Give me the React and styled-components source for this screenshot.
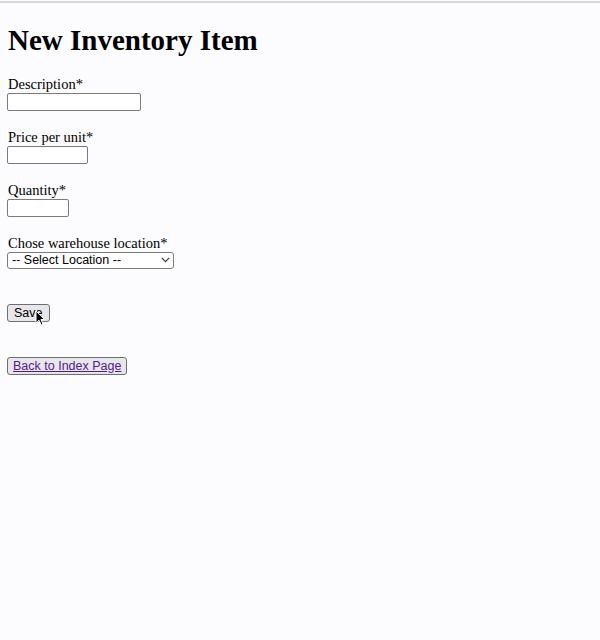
import React from "react";
import styled, { createGlobalStyle } from "styled-components";

const GlobalStyle = createGlobalStyle`
  html, body {
    margin: 0;
    padding: 0;
    background: #fcfbfd;
  }
  body {
    font-family: "Liberation Serif", "Times New Roman", serif;
    color: #000;
  }
`;

const TopRule = styled.div`
  height: 2px;
  margin-top: 1px;
  background: #d7d6d9;
`;

const Page = styled.main`
  padding: 0 7px;
  display: flex;
  flex-direction: column;
  align-items: flex-start;
`;

const Title = styled.h1`
  margin: 20px 0 0 1px;
  font-size: 29px;
  line-height: 34px;
  font-weight: bold;
`;

const Form = styled.form`
  margin-top: 19px;
  display: flex;
  flex-direction: column;
  align-items: flex-start;
  gap: 18px;
`;

const Field = styled.div`
  display: flex;
  flex-direction: column;
  align-items: flex-start;
`;

const Label = styled.label`
  margin-left: 1px;
  font-size: 14.5px;
  line-height: 17px;
`;

const Input = styled.input`
  box-sizing: border-box;
  width: ${({ $w }) => $w}px;
  height: 18px;
  margin: 0;
  padding: 1px 3px;
  border: 1px solid #7b7b7b;
  border-radius: 2px;
  background: #fff;
  font: 12px "Liberation Sans", Arial, sans-serif;
`;

const SelectWrap = styled.div`
  position: relative;
  display: inline-flex;
`;

const Select = styled.select`
  appearance: none;
  box-sizing: border-box;
  width: 167px;
  height: 17px;
  margin: 0;
  padding: 0 16px 0 4px;
  border: 1px solid #7b7b7b;
  border-radius: 3px;
  background: #fff;
  color: #000;
  font: 12.5px/15px "Liberation Sans", Arial, sans-serif;
`;

const Chevron = styled.svg`
  position: absolute;
  right: 4px;
  top: 5px;
  pointer-events: none;
`;

const Button = styled.button`
  box-sizing: border-box;
  height: 18px;
  margin: 0;
  padding: 0 ${({ $pad }) => $pad}px;
  border: 1px solid #6f6f6f;
  border-radius: 3px;
  background: #e7e6ea;
  color: #000;
  font: 12.5px/15px "Liberation Sans", Arial, sans-serif;
  cursor: default;
`;

const ButtonRow = styled.div`
  position: relative;
  display: flex;
  margin-top: 35px;
`;

const Pointer = styled.svg`
  position: absolute;
  left: 28px;
  top: 6px;
  pointer-events: none;
`;

const BackLink = styled.a`
  color: #551a8b;
  text-decoration: underline;
`;

export default function App() {
  return (
    <>
      <GlobalStyle />
      <TopRule />
      <Page>
        <Title>New Inventory Item</Title>
        <Form onSubmit={(e) => e.preventDefault()}>
          <Field>
            <Label htmlFor="description">Description*</Label>
            <Input id="description" $w={134} />
          </Field>
          <Field>
            <Label htmlFor="price">Price per unit*</Label>
            <Input id="price" $w={81} />
          </Field>
          <Field>
            <Label htmlFor="quantity">Quantity*</Label>
            <Input id="quantity" $w={62} />
          </Field>
          <Field>
            <Label htmlFor="location">Chose warehouse location*</Label>
            <SelectWrap>
              <Select id="location" defaultValue="">
                <option value="">-- Select Location --</option>
              </Select>
              <Chevron width="9" height="6" viewBox="0 0 9 6">
                <path d="M0.8 0.8 L4.5 4.6 L8.2 0.8" fill="none" stroke="#333" strokeWidth="1.1" />
              </Chevron>
            </SelectWrap>
          </Field>
        </Form>
        <ButtonRow>
          <Button type="submit" $pad={6}>Save</Button>
          <Pointer width="11" height="16" viewBox="0 0 11 16">
            <path
              d="M1 1 L1 13 L4 10.2 L6.2 15 L8 14.2 L5.9 9.6 L9.8 9.6 Z"
              fill="#000"
              stroke="#fff"
              strokeWidth="1"
              strokeLinejoin="round"
            />
          </Pointer>
        </ButtonRow>
        <ButtonRow>
          <Button type="button" $pad={5}>
            <BackLink href="#">Back to Index Page</BackLink>
          </Button>
        </ButtonRow>
      </Page>
    </>
  );
}
